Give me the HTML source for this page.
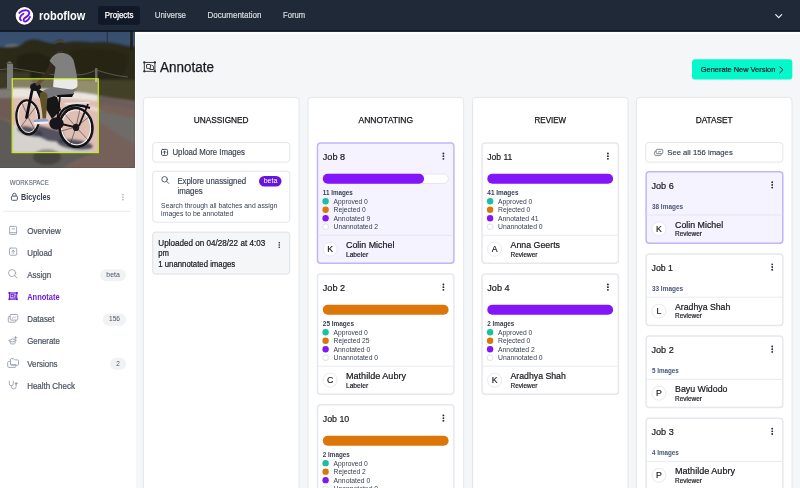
<!DOCTYPE html>
<html><head><meta charset="utf-8"><title>Annotate</title>
<style>
html,body{margin:0;padding:0;width:800px;height:488px;overflow:hidden;background:#f4f6f8}
svg{display:block;font-family:"Liberation Sans",sans-serif}
text{white-space:pre}
</style></head><body>
<svg style="opacity:0.999" width="800" height="488" viewBox="0 0 800 488">
<rect x="0" y="0" width="800" height="488" fill="#f4f6f8"/>
<rect x="0" y="30" width="136.2" height="459" fill="#fff"/>
<rect x="136" y="30" width="664" height="4.1" fill="#fff"/>
<defs>
<clipPath id="pc"><rect x="0" y="30" width="134.75" height="137.8"/></clipPath>
<filter id="b1" x="-10%" y="-10%" width="120%" height="120%"><feGaussianBlur stdDeviation="0.55"/></filter>
<filter id="b2" x="-10%" y="-10%" width="120%" height="120%"><feGaussianBlur stdDeviation="1.2"/></filter>
<linearGradient id="sky" x1="0" y1="0" x2="0" y2="1"><stop offset="0" stop-color="#638dc8"/><stop offset="1" stop-color="#6c95cc"/></linearGradient>
</defs>
<g clip-path="url(#pc)">
<rect x="0" y="29" width="135" height="139" fill="#504e2e"/>
<g filter="url(#b2)">
<rect x="-3" y="24" width="141" height="28" fill="url(#sky)"/>
<ellipse cx="13" cy="46.5" rx="8" ry="2.3" fill="#c9d0da"/><ellipse cx="41" cy="46" rx="7" ry="2.2" fill="#c3cad4"/><ellipse cx="126" cy="51" rx="9" ry="3.5" fill="#c5cdd6"/>
<path d="M-3 47C6 46.5 16 48 22 44 26 39 34 38.5 40 40 46 42 52 44 62 43 68 41 80 41 92 42 104 41 116 42.5 124 45 130 47 138 46 138 46V102H-3Z" fill="#504e2e"/>
<path d="M18 56C30 50 44 52 52 60 50 72 40 78 28 80 16 76 14 64 18 56Z" fill="#403e23"/>
<path d="M70 50C90 46 110 48 128 54 130 70 120 84 100 88 84 84 74 70 70 50Z" fill="#464326"/>
<path d="M-3 72H30V88H-3Z" fill="#6e6842"/>
<path d="M76 80H138V100H76Z" fill="#7a744a"/>
<path d="M12 79H32V90H12Z" fill="#6b6641"/>
<!-- ground -->
<path d="M-3 89.5C10 88 30 88 60 90 80 92 100 97 138 101V170H-3Z" fill="#d8b0a4"/>
<path d="M-3 89.5C10 88 24 88 40 89 60 90.5 80 92 98 95L98 101C70 98 40 97 -3 98Z" fill="#e6e0d7"/>
<path d="M98 96C110 98 124 101 138 104V110C124 107 110 105 98 104Z" fill="#c2aaa2"/>
<path d="M98 111L138 118.5V147L98 121Z" fill="#c8c4c0"/>
<path d="M76 104C86 105 94 107 100 109L100 112C92 110 84 108 76 107.5Z" fill="#ecd6cc"/>
<path d="M-3 118L12 124 51 138.8 98 152.4V153C85 156 70 162 60 170H-3Z" fill="#cecac5"/>
<path d="M-3 118L12.2 123.5V152.6H98C85 156 70 162 60 170H-3Z" fill="#a9a4a0"/>
<path d="M-3 98L13 98 13 121-3 117Z" fill="#c9a79b"/>
<rect x="12.2" y="78.8" width="86.1" height="73.8" fill="#fff" fill-opacity=".18"/>
<ellipse cx="47" cy="157" rx="14" ry="8" fill="#56524f" fill-opacity=".5"/>
<g fill="#34364a" fill-opacity=".8"><ellipse cx="30" cy="131.5" rx="13" ry="4.5" transform="rotate(14 30 131.5)"/><path d="M38 125L62 131 67 143 48 141 35 135Z"/><ellipse cx="75" cy="144.5" rx="18" ry="5" transform="rotate(7 75 144.5)"/></g>
</g>
</g>
<g filter="url(#b1)">
<!-- fence -->
<path d="M7 64h6v25h-6z" fill="#dcdcdc"/><path d="M6 63.5l3.5-2.5 3.5 2.5z" fill="#cfcfcf"/>
<path d="M13 68C24 70 34 72 56 75M76 75C84 75 90 73 96 70 106 73 116 76 128 77M-2 70L7 69" fill="none" stroke="#b4b4b2" stroke-width=".8"/>
<path d="M95 68h2.5v14H95z" fill="#bdbdbd"/>
<path d="M107.3 30V46" stroke="#4a5056" stroke-width=".9"/><path d="M131.5 29V50" stroke="#3d3d30" stroke-width="2.6"/>
<!-- wheels -->
<ellipse cx="27.7" cy="117.3" rx="11.2" ry="17" fill="none" stroke="#121216" stroke-width="2.3" transform="rotate(-5 27.7 117.3)"/>
<ellipse cx="27.7" cy="117.3" rx="9.6" ry="15.3" fill="none" stroke="#f2f2f2" stroke-width=".9" transform="rotate(-5 27.7 117.3)"/>
<ellipse cx="76" cy="127.4" rx="16.4" ry="19.4" fill="none" stroke="#121216" stroke-width="2.6" transform="rotate(-7 76 127.4)"/>
<ellipse cx="76" cy="127.4" rx="14.5" ry="17.4" fill="none" stroke="#f4f4f4" stroke-width="1" transform="rotate(-7 76 127.4)"/>
<path d="M76 127L64 113M76 127L90 116M76 127L70 145M76 127L88 140M76 127L61 131M76 127L80 109M28 117L22 103M28 117L37 105M28 117L20 128M28 117L35 130M28 117L29 100" stroke="#2e2e34" stroke-width=".55"/>
<ellipse cx="76" cy="127.4" rx="3.2" ry="3.6" fill="#1a1a1e"/>
<!-- frame -->
<path d="M58 121C60 106 74 102 90 108" fill="none" stroke="#101014" stroke-width="2.3"/>
<path d="M33 86L26.5 117.5" stroke="#101014" stroke-width="2.8" stroke-linecap="round"/>
<ellipse cx="35.5" cy="87" rx="5.5" ry="4" fill="#15151a"/>
<path d="M35 88L57 97 61 110 52 119 39 97Z" fill="#131318"/>
<path d="M60 96L57 122M57 123L76 127.4M88 104L79 126" fill="none" stroke="#121216" stroke-width="1.8"/>
<path d="M64.5 102.8L89.5 101.8 90 103.3 65 104.8Z" fill="#e4e4e4"/>
<path d="M54.5 93C58 90.8 69 90.8 74 93.2L72 97H57.5Z" fill="#0f0f12"/>
<ellipse cx="56.5" cy="123.5" rx="7.2" ry="6.2" fill="#16161a"/>
<!-- person -->
<circle cx="59.2" cy="46.2" r="6.3" fill="#4f4a3a"/><path d="M53.5 45a5.9 5.9 0 0 1 11.6-1.5C61 41.5 57.5 42.5 53.5 45Z" fill="#77776f"/>
<path d="M57 51h6v4h-6z" fill="#6a5a44"/>
<path d="M50 62C48 70 42 78 35 84L37.5 86C45 80 51.5 73 55 66Z" fill="#5f4f38"/>
<path d="M49.5 61C52 56 56 53 60 53 66 52.5 71 55 73.5 60 76 70 78 80 77.5 86 76 90 66 92 53.5 91 52.5 84 54.5 74 55.5 67Z" fill="#e9e9e7"/>
<path d="M53 87C60 88 68 89 75 90L73 94 58 95 46 99 40 95 44 90Z" fill="#74747a"/>
<path d="M40 93C43 91 47 92.5 47.5 96L46 118.5 42.5 118.5C42.5 108 39 100 40 93Z" fill="#5e5226"/>
<path d="M33.5 120.5C37 118.5 44 118.5 48 119.5L48.3 122 34 123Z" fill="#8fa0c4"/><path d="M33.5 122L48.3 121.5 48.3 123.5 34 124.5Z" fill="#eef0f6"/>
</g>
<path d="M0 29h135v139H0ZM12.2 78.8V152.6H98.3V78.8Z" fill="#000" fill-opacity=".45" fill-rule="evenodd"/>
<rect x="12.2" y="78.8" width="86.1" height="73.8" fill="none" stroke="#c9f01c" stroke-width="1.15"/>
</g>
<text x="9.75" y="185.2" font-size="7.07" fill="#6b7280" textLength="39" lengthAdjust="spacingAndGlyphs" stroke="#6b7280" stroke-width="0.15">WORKSPACE</text>
<g fill="none" stroke="#4b5563" stroke-width=".95"><rect x="11.4" y="196.1" width="6" height="4.2" rx="1"/><path d="M12.7 196.1v-1.2a1.7 1.7 0 0 1 3.4 0v1.2"/></g>
<text x="21.1" y="199.8" font-size="8.53" fill="#374151" font-weight="bold" textLength="29.4" lengthAdjust="spacingAndGlyphs">Bicycles</text>
<circle cx="122.9" cy="194.7" r="0.8" fill="#9ca3af"/>
<circle cx="122.9" cy="197.2" r="0.8" fill="#9ca3af"/>
<circle cx="122.9" cy="199.7" r="0.8" fill="#9ca3af"/>
<rect x="3.2" y="210.7" width="127.5" height="1" fill="#e8eaf0"/>
<text x="27.2" y="233.5" font-size="8.53" fill="#4b5563" textLength="33.7" lengthAdjust="spacingAndGlyphs" stroke="#4b5563" stroke-width="0.22">Overview</text>
<text x="27.2" y="255.67" font-size="8.53" fill="#4b5563" textLength="25" lengthAdjust="spacingAndGlyphs" stroke="#4b5563" stroke-width="0.22">Upload</text>
<text x="27.2" y="277.84" font-size="8.53" fill="#4b5563" textLength="24" lengthAdjust="spacingAndGlyphs" stroke="#4b5563" stroke-width="0.22">Assign</text>
<rect x="100.1" y="269.14" width="25.9" height="12.2" fill="#f1f2f4" rx="6.1"/>
<text x="106.25" y="277.04" font-size="6.86" fill="#4b5563" textLength="13.6" lengthAdjust="spacingAndGlyphs">beta</text>
<text x="27.2" y="300.01" font-size="8.53" fill="#6a1bd6" font-weight="bold" textLength="32.4" lengthAdjust="spacingAndGlyphs">Annotate</text>
<text x="27.2" y="322.18" font-size="8.53" fill="#4b5563" textLength="27.3" lengthAdjust="spacingAndGlyphs" stroke="#4b5563" stroke-width="0.22">Dataset</text>
<rect x="102.8" y="313.48" width="23.4" height="12.2" fill="#f1f2f4" rx="6.1"/>
<text x="109" y="321.38" font-size="6.86" fill="#4b5563" textLength="11" lengthAdjust="spacingAndGlyphs">156</text>
<text x="27.2" y="344.35" font-size="8.53" fill="#4b5563" textLength="32.7" lengthAdjust="spacingAndGlyphs" stroke="#4b5563" stroke-width="0.22">Generate</text>
<text x="27.2" y="366.52" font-size="8.53" fill="#4b5563" textLength="30.4" lengthAdjust="spacingAndGlyphs" stroke="#4b5563" stroke-width="0.22">Versions</text>
<rect x="110" y="357.82" width="16.2" height="12.2" fill="#f1f2f4" rx="6.1"/>
<text x="116.3" y="365.72" font-size="6.86" fill="#4b5563" textLength="3.6" lengthAdjust="spacingAndGlyphs">2</text>
<text x="27.2" y="388.69" font-size="8.53" fill="#4b5563" textLength="47.7" lengthAdjust="spacingAndGlyphs" stroke="#4b5563" stroke-width="0.22">Health Check</text>
<g fill="none" stroke="#9aa1ad" stroke-width=".9" stroke-linecap="round" stroke-linejoin="round">
<rect x="9.6" y="226.4" width="7" height="8" rx=".8"/><path d="M9.6 232.7h7"/><rect x="11.9" y="228.3" width="3" height="1.3" fill="#b9bec8" stroke="none"/>
<rect x="9.55" y="248.05" width="7.2" height="7.2" rx="1"/><path d="M13.15 253.5v-3.2M11.6 251.7l1.55-1.5 1.55 1.5"/>
<circle cx="12.1" cy="273.05" r="3.5"/><path d="M14.7 275.65l2.4 2.4"/>
<rect x="8.3" y="316.6" width="7.6" height="5.6" rx="1"/><rect x="10.2" y="314.5" width="7.6" height="5.6" rx="1" fill="#fff"/><path d="M12.2 318.4l1.3-1.2 1 .8 1.3-1.4" stroke-width=".7"/>
<path d="M9 340.4l3.7-1.5 3.7 1.5-3.7 1.5zM10.2 341.3v1.9c0 1.1 5 1.1 5 0v-1.9M15.6 336.5v2.6M14.3 337.8h2.6"/>
<path d="M7.7 362.2a.8.8 0 0 1 .8-.8h2v2.4a.8.8 0 0 0 .8.8h4.5v2a.8.8 0 0 1-.8.8H8.5a.8.8 0 0 1-.8-.8z"/><path d="M10.5 359.5a.8.8 0 0 1 .8-.8h2.1l1.2 1.2h3.1a.8.8 0 0 1 .8.8v3.7a.8.8 0 0 1-.8.8h-6.4a.8.8 0 0 1-.8-.8z"/>
<path d="M9.3 381.2v2.5a2 2 0 0 0 4 0v-2.5M11.3 385.7v.9a2.4 2.4 0 0 0 4.8 0v-2.1"/><circle cx="16.15" cy="383.5" r=".9" fill="#a3a9b5"/>
</g>
<g fill="none" stroke="#6a1bd6" stroke-width="1"><rect x="9.4" y="292.9" width="7.4" height="6.3"/><rect x="11.1" y="294.5" width="2.4" height="2.2" stroke-width=".7"/><path d="M14.3 294.9l1.5 1v2.1h-2.8" stroke-width=".7"/></g>
<g fill="#6a1bd6"><rect x="8.5" y="292" width="1.8" height="1.8"/><rect x="15.9" y="292" width="1.8" height="1.8"/><rect x="8.5" y="298.3" width="1.8" height="1.8"/><rect x="15.9" y="298.3" width="1.8" height="1.8"/><rect x="9.4" y="292.9" width="7.4" height="6.3" fill-opacity=".35"/></g>
<rect x="0" y="0" width="800" height="31.7" fill="#1f2937"/>
<rect x="0" y="30.3" width="800" height="1.4" fill="#0d1424"/>
<circle cx="24.45" cy="15.85" r="9.4" fill="#151c2a"/><circle cx="24.45" cy="15.85" r="8.8" fill="#fff"/>
<g fill="none" stroke="#6a14e2" stroke-width="1.9" stroke-linecap="round"><path d="M19.3 12.9C21.5 10.8 24.5 10 26.8 10.4 29.3 10.9 30 13.2 28.4 15.2 27 17 24.4 17.6 23.7 19.3 23 21.1 24.8 22 26.5 21.1 28 20.2 29.2 18.8 29.9 17"/><path d="M23.4 13.7C21.5 14.8 20.3 16.3 20 17.8 19.8 19 20.3 19.8 21 20.3"/></g>
<text x="39" y="19.75" font-size="12.27" fill="#fff" font-weight="bold" textLength="46.25" lengthAdjust="spacingAndGlyphs">roboflow</text>
<rect x="98.1" y="6" width="41.9" height="18.75" fill="#111827" rx="3"/>
<text x="104.75" y="18.1" font-size="8.22" fill="#fff" textLength="28.75" lengthAdjust="spacingAndGlyphs" stroke="#fff" stroke-width="0.25">Projects</text>
<text x="154.75" y="18.1" font-size="8.22" fill="#d8dbe0" textLength="31.25" lengthAdjust="spacingAndGlyphs" stroke="#d8dbe0" stroke-width="0.2">Universe</text>
<text x="207.5" y="18.1" font-size="8.22" fill="#d8dbe0" textLength="54" lengthAdjust="spacingAndGlyphs" stroke="#d8dbe0" stroke-width="0.2">Documentation</text>
<text x="283" y="18.1" font-size="8.22" fill="#d8dbe0" textLength="22" lengthAdjust="spacingAndGlyphs" stroke="#d8dbe0" stroke-width="0.2">Forum</text>
<path d="M775.7 14.7l3 3 3-3" fill="none" stroke="#f3f4f6" stroke-width="1.2" stroke-linecap="round" stroke-linejoin="round"/>
<g fill="none" stroke="#2b2b2e" stroke-width=".9"><rect x="144.3" y="62.4" width="10.6" height="8.9"/><rect x="146.5" y="64.5" width="4" height="3.9" rx=".5"/><path d="M151.4 65l2.2 1.3v3.2h-3.8l.8-1.1"/></g><g fill="#2b2b2e"><circle cx="144.3" cy="62.4" r="1.15"/><circle cx="154.9" cy="62.4" r="1.15"/><circle cx="144.3" cy="71.3" r="1.15"/><circle cx="154.9" cy="71.3" r="1.15"/></g>
<text x="160" y="71.6" font-size="14.04" fill="#17181c" textLength="54" lengthAdjust="spacingAndGlyphs" stroke="#17181c" stroke-width="0.25">Annotate</text>
<rect x="692" y="59.35" width="100.3" height="20.25" fill="#03f9cb" rx="3"/>
<text x="700.8" y="71.5" font-size="8.11" fill="#15161b" textLength="74.5" lengthAdjust="spacingAndGlyphs" stroke="#15161b" stroke-width="0.2">Generate New Version</text>
<path d="M779.9 66.9l3 2.9-3 2.9" fill="none" stroke="#111827" stroke-width="1" stroke-linecap="round" stroke-linejoin="round"/>
<rect x="143.4" y="97.4" width="155.6" height="400" fill="#fff" rx="3.5" stroke="#e3e6ec" stroke-width="1"/>
<text x="193.8" y="123.2" font-size="8.63" fill="#15161b" textLength="54.8" lengthAdjust="spacingAndGlyphs" stroke="#15161b" stroke-width="0.25">UNASSIGNED</text>
<rect x="308" y="97.4" width="155.6" height="400" fill="#fff" rx="3.5" stroke="#e3e6ec" stroke-width="1"/>
<text x="358.55" y="123.2" font-size="8.63" fill="#15161b" textLength="54.5" lengthAdjust="spacingAndGlyphs" stroke="#15161b" stroke-width="0.25">ANNOTATING</text>
<rect x="472.5" y="97.4" width="155.6" height="400" fill="#fff" rx="3.5" stroke="#e3e6ec" stroke-width="1"/>
<text x="534.55" y="123.2" font-size="8.63" fill="#15161b" textLength="31.5" lengthAdjust="spacingAndGlyphs" stroke="#15161b" stroke-width="0.25">REVIEW</text>
<rect x="636.4" y="97.4" width="155.6" height="400" fill="#fff" rx="3.5" stroke="#e3e6ec" stroke-width="1"/>
<text x="695.7" y="123.2" font-size="8.63" fill="#15161b" textLength="37" lengthAdjust="spacingAndGlyphs" stroke="#15161b" stroke-width="0.25">DATASET</text>
<rect x="152.7" y="142.6" width="137.1" height="19.5" fill="#fff" rx="3" stroke="#e3e5ea" stroke-width="1"/>
<g fill="none" stroke="#374151" stroke-width=".9" stroke-linecap="round" stroke-linejoin="round"><rect x="161.5" y="149.4" width="6.1" height="6" rx="1.1"/><path d="M164.55 154v-2.9M163.2 152.4l1.35-1.35 1.35 1.35"/></g>
<text x="172.4" y="155.25" font-size="8.22" fill="#374151" textLength="72.6" lengthAdjust="spacingAndGlyphs" stroke="#374151" stroke-width="0.15">Upload More Images</text>
<rect x="152.7" y="171.2" width="137.1" height="51" fill="#fff" rx="3" stroke="#e3e5ea" stroke-width="1"/>
<g fill="none" stroke="#4b5563" stroke-width="0.95" stroke-linecap="round"><circle cx="164.6" cy="179.3" r="2.75"/><path d="M166.7 181.4l2.1 2.1"/></g>
<text x="177.4" y="183.75" font-size="8.32" fill="#374151" textLength="68.7" lengthAdjust="spacingAndGlyphs" stroke="#374151" stroke-width="0.15">Explore unassigned</text>
<text x="177.4" y="194.1" font-size="8.32" fill="#374151" textLength="25.3" lengthAdjust="spacingAndGlyphs" stroke="#374151" stroke-width="0.15">images</text>
<rect x="259" y="175.9" width="22.5" height="10.7" fill="#6714db" rx="5.35"/>
<text x="263.7" y="183.4" font-size="7.28" fill="#fff" textLength="13.7" lengthAdjust="spacingAndGlyphs">beta</text>
<text x="161.1" y="207.7" font-size="6.97" fill="#374151" textLength="116.3" lengthAdjust="spacingAndGlyphs">Search through all batches and assign</text>
<text x="161.1" y="216.4" font-size="6.97" fill="#374151" textLength="72.2" lengthAdjust="spacingAndGlyphs">images to be annotated</text>
<rect x="152.7" y="232.1" width="137" height="42" fill="#f5f6f8" rx="3" stroke="#dde0e6" stroke-width="1"/>
<text x="158.3" y="245.7" font-size="8.42" fill="#15161b" textLength="106.9" lengthAdjust="spacingAndGlyphs" stroke="#15161b" stroke-width="0.2">Uploaded on 04/28/22 at 4:03</text>
<text x="158.3" y="256.1" font-size="8.42" fill="#15161b" textLength="10.7" lengthAdjust="spacingAndGlyphs" stroke="#15161b" stroke-width="0.2">pm</text>
<text x="158.3" y="266.7" font-size="8.42" fill="#15161b" textLength="76.9" lengthAdjust="spacingAndGlyphs" stroke="#15161b" stroke-width="0.2">1 unannotated images</text>
<circle cx="279.25" cy="242.75" r="0.8" fill="#1f2937"/>
<circle cx="279.25" cy="245" r="0.8" fill="#1f2937"/>
<circle cx="279.25" cy="247.25" r="0.8" fill="#1f2937"/>
<rect x="645.7" y="142.6" width="137.1" height="19.5" fill="#fff" rx="3" stroke="#e3e5ea" stroke-width="1"/>
<g fill="none" stroke="#6b7280" stroke-width=".85" stroke-linejoin="round"><rect x="654.65" y="151.1" width="6.6" height="4.3" rx=".9"/><rect x="656.2" y="149.3" width="6.6" height="4.3" rx=".9" fill="#fff"/><path d="M658 152.4l1.1-1 .8.6 1.2-1.3" stroke-width=".8"/></g>
<text x="667.25" y="155" font-size="8.11" fill="#374151" textLength="65.5" lengthAdjust="spacingAndGlyphs" stroke="#374151" stroke-width="0.15">See all 156 images</text>
<rect x="317.5" y="142.9" width="136.4" height="120.4" fill="#f5f3ff" rx="3.2" stroke="#c3b4fb" stroke-width="1.5"/>
<text x="322.8" y="159.85" font-size="9.88" fill="#15161b" textLength="22.25" lengthAdjust="spacingAndGlyphs" stroke="#15161b" stroke-width="0.2">Job 8</text>
<circle cx="443.4" cy="153.45" r="0.95" fill="#1f2937"/>
<circle cx="443.4" cy="156.15" r="0.95" fill="#1f2937"/>
<circle cx="443.4" cy="158.85" r="0.95" fill="#1f2937"/>
<rect x="323.1" y="174.05" width="125.2" height="9.4" fill="#fff" rx="4.7" stroke="#dfe0ea" stroke-width="0.8"/>
<rect x="322.8" y="173.75" width="101.27" height="10" fill="#8315f9" rx="5"/>
<text x="322.8" y="194.75" font-size="6.86" fill="#374151" font-weight="bold" textLength="29.9" lengthAdjust="spacingAndGlyphs">11 Images</text>
<circle cx="325.6" cy="201.2" r="3.2" fill="#18c2a0"/>
<text x="333.5" y="203.65" font-size="6.97" fill="#374151" textLength="34.3" lengthAdjust="spacingAndGlyphs">Approved 0</text>
<circle cx="325.6" cy="209.7" r="3.2" fill="#dc7609"/>
<text x="333.5" y="212.15" font-size="6.97" fill="#374151" textLength="32.3" lengthAdjust="spacingAndGlyphs">Rejected 0</text>
<circle cx="325.6" cy="218.2" r="3.2" fill="#8315f9"/>
<text x="333.5" y="220.65" font-size="6.97" fill="#374151" textLength="36.8" lengthAdjust="spacingAndGlyphs">Annotated 9</text>
<circle cx="325.6" cy="226.7" r="2.85" fill="#fff" stroke="#d6d9df" stroke-width="0.8"/>
<text x="333.5" y="229.15" font-size="6.97" fill="#374151" textLength="44.6" lengthAdjust="spacingAndGlyphs">Unannotated 2</text>
<path d="M317.9 235.25L453.4 235.25" stroke="#e6e5f1" stroke-width="1"/>
<circle cx="330.1" cy="249.15" r="7" fill="#fff" stroke="#e2e4e9" stroke-width="0.8"/>
<text x="330.1" y="252.15" font-size="8.74" fill="#15161b" text-anchor="middle" stroke="#15161b" stroke-width="0.15">K</text>
<text x="346" y="247.95" font-size="9.26" fill="#15161b" textLength="48.4" lengthAdjust="spacingAndGlyphs" stroke="#15161b" stroke-width="0.2">Colin Michel</text>
<text x="346" y="256.55" font-size="6.66" fill="#1b1d24" textLength="22.1" lengthAdjust="spacingAndGlyphs" stroke="#1b1d24" stroke-width="0.2">Labeler</text>
<rect x="317.5" y="273.9" width="136.4" height="120.4" fill="#fff" rx="3.2" stroke="#e6e8ed" stroke-width="1.5"/>
<text x="322.8" y="290.85" font-size="9.88" fill="#15161b" textLength="22.25" lengthAdjust="spacingAndGlyphs" stroke="#15161b" stroke-width="0.2">Job 2</text>
<circle cx="443.4" cy="284.45" r="0.95" fill="#1f2937"/>
<circle cx="443.4" cy="287.15" r="0.95" fill="#1f2937"/>
<circle cx="443.4" cy="289.85" r="0.95" fill="#1f2937"/>
<rect x="322.8" y="304.75" width="125.8" height="10" fill="#dc7609" rx="5"/>
<text x="322.8" y="325.75" font-size="6.86" fill="#374151" font-weight="bold" textLength="31.2" lengthAdjust="spacingAndGlyphs">25 Images</text>
<circle cx="325.6" cy="332.2" r="3.2" fill="#18c2a0"/>
<text x="333.5" y="334.65" font-size="6.97" fill="#374151" textLength="34.3" lengthAdjust="spacingAndGlyphs">Approved 0</text>
<circle cx="325.6" cy="340.7" r="3.2" fill="#dc7609"/>
<text x="333.5" y="343.15" font-size="6.97" fill="#374151" textLength="36.15" lengthAdjust="spacingAndGlyphs">Rejected 25</text>
<circle cx="325.6" cy="349.2" r="3.2" fill="#8315f9"/>
<text x="333.5" y="351.65" font-size="6.97" fill="#374151" textLength="36.8" lengthAdjust="spacingAndGlyphs">Annotated 0</text>
<circle cx="325.6" cy="357.7" r="2.85" fill="#fff" stroke="#d6d9df" stroke-width="0.8"/>
<text x="333.5" y="360.15" font-size="6.97" fill="#374151" textLength="44.6" lengthAdjust="spacingAndGlyphs">Unannotated 0</text>
<path d="M317.9 366.25L453.4 366.25" stroke="#e9ebef" stroke-width="1"/>
<circle cx="330.1" cy="380.15" r="7" fill="#fff" stroke="#e2e4e9" stroke-width="0.8"/>
<text x="330.1" y="383.15" font-size="8.74" fill="#15161b" text-anchor="middle" stroke="#15161b" stroke-width="0.15">C</text>
<text x="346" y="378.95" font-size="9.26" fill="#15161b" textLength="60" lengthAdjust="spacingAndGlyphs" stroke="#15161b" stroke-width="0.2">Mathilde Aubry</text>
<text x="346" y="387.55" font-size="6.66" fill="#1b1d24" textLength="22.1" lengthAdjust="spacingAndGlyphs" stroke="#1b1d24" stroke-width="0.2">Labeler</text>
<rect x="317.5" y="404.85" width="136.4" height="120.4" fill="#fff" rx="3.2" stroke="#e6e8ed" stroke-width="1.5"/>
<text x="322.8" y="421.8" font-size="9.88" fill="#15161b" textLength="26.4" lengthAdjust="spacingAndGlyphs" stroke="#15161b" stroke-width="0.2">Job 10</text>
<circle cx="443.4" cy="415.4" r="0.95" fill="#1f2937"/>
<circle cx="443.4" cy="418.1" r="0.95" fill="#1f2937"/>
<circle cx="443.4" cy="420.8" r="0.95" fill="#1f2937"/>
<rect x="322.8" y="435.7" width="125.8" height="10" fill="#dc7609" rx="5"/>
<text x="322.8" y="456.7" font-size="6.86" fill="#374151" font-weight="bold" textLength="27" lengthAdjust="spacingAndGlyphs">2 Images</text>
<circle cx="325.6" cy="463.15" r="3.2" fill="#18c2a0"/>
<text x="333.5" y="465.6" font-size="6.97" fill="#374151" textLength="34.3" lengthAdjust="spacingAndGlyphs">Approved 0</text>
<circle cx="325.6" cy="471.65" r="3.2" fill="#dc7609"/>
<text x="333.5" y="474.1" font-size="6.97" fill="#374151" textLength="32.3" lengthAdjust="spacingAndGlyphs">Rejected 2</text>
<circle cx="325.6" cy="480.15" r="3.2" fill="#8315f9"/>
<text x="333.5" y="482.6" font-size="6.97" fill="#374151" textLength="36.8" lengthAdjust="spacingAndGlyphs">Annotated 0</text>
<circle cx="325.6" cy="488.65" r="2.85" fill="#fff" stroke="#d6d9df" stroke-width="0.8"/>
<text x="333.5" y="491.1" font-size="6.97" fill="#374151" textLength="44.6" lengthAdjust="spacingAndGlyphs">Unannotated 0</text>
<rect x="482" y="142.9" width="136.4" height="120.4" fill="#fff" rx="3.2" stroke="#e6e8ed" stroke-width="1.5"/>
<text x="487.3" y="159.85" font-size="9.88" fill="#15161b" textLength="25" lengthAdjust="spacingAndGlyphs" stroke="#15161b" stroke-width="0.2">Job 11</text>
<circle cx="607.9" cy="153.45" r="0.95" fill="#1f2937"/>
<circle cx="607.9" cy="156.15" r="0.95" fill="#1f2937"/>
<circle cx="607.9" cy="158.85" r="0.95" fill="#1f2937"/>
<rect x="487.3" y="173.75" width="125.8" height="10" fill="#8315f9" rx="5"/>
<text x="487.3" y="194.75" font-size="6.86" fill="#374151" font-weight="bold" textLength="31.2" lengthAdjust="spacingAndGlyphs">41 Images</text>
<circle cx="490.1" cy="201.2" r="3.2" fill="#18c2a0"/>
<text x="498" y="203.65" font-size="6.97" fill="#374151" textLength="34.3" lengthAdjust="spacingAndGlyphs">Approved 0</text>
<circle cx="490.1" cy="209.7" r="3.2" fill="#dc7609"/>
<text x="498" y="212.15" font-size="6.97" fill="#374151" textLength="32.3" lengthAdjust="spacingAndGlyphs">Rejected 0</text>
<circle cx="490.1" cy="218.2" r="3.2" fill="#8315f9"/>
<text x="498" y="220.65" font-size="6.97" fill="#374151" textLength="40.65" lengthAdjust="spacingAndGlyphs">Annotated 41</text>
<circle cx="490.1" cy="226.7" r="2.85" fill="#fff" stroke="#d6d9df" stroke-width="0.8"/>
<text x="498" y="229.15" font-size="6.97" fill="#374151" textLength="44.6" lengthAdjust="spacingAndGlyphs">Unannotated 0</text>
<path d="M482.4 235.25L617.9 235.25" stroke="#e9ebef" stroke-width="1"/>
<circle cx="494.6" cy="249.15" r="7" fill="#fff" stroke="#e2e4e9" stroke-width="0.8"/>
<text x="494.6" y="252.15" font-size="8.74" fill="#15161b" text-anchor="middle" stroke="#15161b" stroke-width="0.15">A</text>
<text x="510.5" y="247.95" font-size="9.26" fill="#15161b" textLength="49.5" lengthAdjust="spacingAndGlyphs" stroke="#15161b" stroke-width="0.2">Anna Geerts</text>
<text x="510.5" y="256.55" font-size="6.66" fill="#1b1d24" textLength="26.9" lengthAdjust="spacingAndGlyphs" stroke="#1b1d24" stroke-width="0.2">Reviewer</text>
<rect x="482" y="273.9" width="136.4" height="120.4" fill="#fff" rx="3.2" stroke="#e6e8ed" stroke-width="1.5"/>
<text x="487.3" y="290.85" font-size="9.88" fill="#15161b" textLength="22.25" lengthAdjust="spacingAndGlyphs" stroke="#15161b" stroke-width="0.2">Job 4</text>
<circle cx="607.9" cy="284.45" r="0.95" fill="#1f2937"/>
<circle cx="607.9" cy="287.15" r="0.95" fill="#1f2937"/>
<circle cx="607.9" cy="289.85" r="0.95" fill="#1f2937"/>
<rect x="487.3" y="304.75" width="125.8" height="10" fill="#8315f9" rx="5"/>
<text x="487.3" y="325.75" font-size="6.86" fill="#374151" font-weight="bold" textLength="27" lengthAdjust="spacingAndGlyphs">2 Images</text>
<circle cx="490.1" cy="332.2" r="3.2" fill="#18c2a0"/>
<text x="498" y="334.65" font-size="6.97" fill="#374151" textLength="34.3" lengthAdjust="spacingAndGlyphs">Approved 0</text>
<circle cx="490.1" cy="340.7" r="3.2" fill="#dc7609"/>
<text x="498" y="343.15" font-size="6.97" fill="#374151" textLength="32.3" lengthAdjust="spacingAndGlyphs">Rejected 0</text>
<circle cx="490.1" cy="349.2" r="3.2" fill="#8315f9"/>
<text x="498" y="351.65" font-size="6.97" fill="#374151" textLength="36.8" lengthAdjust="spacingAndGlyphs">Annotated 2</text>
<circle cx="490.1" cy="357.7" r="2.85" fill="#fff" stroke="#d6d9df" stroke-width="0.8"/>
<text x="498" y="360.15" font-size="6.97" fill="#374151" textLength="44.6" lengthAdjust="spacingAndGlyphs">Unannotated 0</text>
<path d="M482.4 366.25L617.9 366.25" stroke="#e9ebef" stroke-width="1"/>
<circle cx="494.6" cy="380.15" r="7" fill="#fff" stroke="#e2e4e9" stroke-width="0.8"/>
<text x="494.6" y="383.15" font-size="8.74" fill="#15161b" text-anchor="middle" stroke="#15161b" stroke-width="0.15">K</text>
<text x="510.5" y="378.95" font-size="9.26" fill="#15161b" textLength="55.3" lengthAdjust="spacingAndGlyphs" stroke="#15161b" stroke-width="0.2">Aradhya Shah</text>
<text x="510.5" y="387.55" font-size="6.66" fill="#1b1d24" textLength="26.9" lengthAdjust="spacingAndGlyphs" stroke="#1b1d24" stroke-width="0.2">Reviewer</text>
<rect x="646.1" y="171.75" width="136.7" height="71.5" fill="#f5f3ff" rx="3.2" stroke="#c3b4fb" stroke-width="1.5"/>
<text x="651.5" y="188.5" font-size="9.88" fill="#15161b" textLength="22.25" lengthAdjust="spacingAndGlyphs" stroke="#15161b" stroke-width="0.2">Job 6</text>
<circle cx="772.2" cy="182.2" r="0.95" fill="#1f2937"/>
<circle cx="772.2" cy="184.9" r="0.95" fill="#1f2937"/>
<circle cx="772.2" cy="187.6" r="0.95" fill="#1f2937"/>
<text x="651.9" y="208.5" font-size="6.86" fill="#4a5578" font-weight="bold" textLength="31.2" lengthAdjust="spacingAndGlyphs">38 Images</text>
<path d="M646.5 215L782.3 215" stroke="#e6e5f1" stroke-width="1"/>
<circle cx="658.9" cy="228.9" r="7" fill="#fff" stroke="#e2e4e9" stroke-width="0.8"/>
<text x="658.9" y="231.8" font-size="8.74" fill="#15161b" text-anchor="middle" stroke="#15161b" stroke-width="0.15">K</text>
<text x="675" y="227.5" font-size="9.26" fill="#15161b" textLength="48.1" lengthAdjust="spacingAndGlyphs" stroke="#15161b" stroke-width="0.2">Colin Michel</text>
<text x="675" y="236.2" font-size="6.66" fill="#1b1d24" textLength="26.9" lengthAdjust="spacingAndGlyphs" stroke="#1b1d24" stroke-width="0.2">Reviewer</text>
<rect x="646.1" y="253.9" width="136.7" height="71.5" fill="#fff" rx="3.2" stroke="#e6e8ed" stroke-width="1.5"/>
<text x="651.5" y="270.65" font-size="9.88" fill="#15161b" textLength="21.5" lengthAdjust="spacingAndGlyphs" stroke="#15161b" stroke-width="0.2">Job 1</text>
<circle cx="772.2" cy="264.35" r="0.95" fill="#1f2937"/>
<circle cx="772.2" cy="267.05" r="0.95" fill="#1f2937"/>
<circle cx="772.2" cy="269.75" r="0.95" fill="#1f2937"/>
<text x="651.9" y="290.65" font-size="6.86" fill="#4a5578" font-weight="bold" textLength="31.2" lengthAdjust="spacingAndGlyphs">33 Images</text>
<path d="M646.5 297.15L782.3 297.15" stroke="#e9ebef" stroke-width="1"/>
<circle cx="658.9" cy="311.05" r="7" fill="#fff" stroke="#e2e4e9" stroke-width="0.8"/>
<text x="658.9" y="313.95" font-size="8.74" fill="#15161b" text-anchor="middle" stroke="#15161b" stroke-width="0.15">L</text>
<text x="675" y="309.65" font-size="9.26" fill="#15161b" textLength="55.3" lengthAdjust="spacingAndGlyphs" stroke="#15161b" stroke-width="0.2">Aradhya Shah</text>
<text x="675" y="318.35" font-size="6.66" fill="#1b1d24" textLength="26.9" lengthAdjust="spacingAndGlyphs" stroke="#1b1d24" stroke-width="0.2">Reviewer</text>
<rect x="646.1" y="336.05" width="136.7" height="71.5" fill="#fff" rx="3.2" stroke="#e6e8ed" stroke-width="1.5"/>
<text x="651.5" y="352.8" font-size="9.88" fill="#15161b" textLength="22.25" lengthAdjust="spacingAndGlyphs" stroke="#15161b" stroke-width="0.2">Job 2</text>
<circle cx="772.2" cy="346.5" r="0.95" fill="#1f2937"/>
<circle cx="772.2" cy="349.2" r="0.95" fill="#1f2937"/>
<circle cx="772.2" cy="351.9" r="0.95" fill="#1f2937"/>
<text x="651.9" y="372.8" font-size="6.86" fill="#4a5578" font-weight="bold" textLength="27" lengthAdjust="spacingAndGlyphs">5 Images</text>
<path d="M646.5 379.3L782.3 379.3" stroke="#e9ebef" stroke-width="1"/>
<circle cx="658.9" cy="393.2" r="7" fill="#fff" stroke="#e2e4e9" stroke-width="0.8"/>
<text x="658.9" y="396.1" font-size="8.74" fill="#15161b" text-anchor="middle" stroke="#15161b" stroke-width="0.15">P</text>
<text x="675" y="391.8" font-size="9.26" fill="#15161b" textLength="52.5" lengthAdjust="spacingAndGlyphs" stroke="#15161b" stroke-width="0.2">Bayu Widodo</text>
<text x="675" y="400.5" font-size="6.66" fill="#1b1d24" textLength="26.9" lengthAdjust="spacingAndGlyphs" stroke="#1b1d24" stroke-width="0.2">Reviewer</text>
<rect x="646.1" y="418.2" width="136.7" height="71.5" fill="#fff" rx="3.2" stroke="#e6e8ed" stroke-width="1.5"/>
<text x="651.5" y="434.95" font-size="9.88" fill="#15161b" textLength="22.25" lengthAdjust="spacingAndGlyphs" stroke="#15161b" stroke-width="0.2">Job 3</text>
<circle cx="772.2" cy="428.65" r="0.95" fill="#1f2937"/>
<circle cx="772.2" cy="431.35" r="0.95" fill="#1f2937"/>
<circle cx="772.2" cy="434.05" r="0.95" fill="#1f2937"/>
<text x="651.9" y="454.95" font-size="6.86" fill="#4a5578" font-weight="bold" textLength="27" lengthAdjust="spacingAndGlyphs">4 Images</text>
<path d="M646.5 461.45L782.3 461.45" stroke="#e9ebef" stroke-width="1"/>
<circle cx="658.9" cy="475.35" r="7" fill="#fff" stroke="#e2e4e9" stroke-width="0.8"/>
<text x="658.9" y="478.25" font-size="8.74" fill="#15161b" text-anchor="middle" stroke="#15161b" stroke-width="0.15">P</text>
<text x="675" y="473.95" font-size="9.26" fill="#15161b" textLength="60" lengthAdjust="spacingAndGlyphs" stroke="#15161b" stroke-width="0.2">Mathilde Aubry</text>
<text x="675" y="482.65" font-size="6.66" fill="#1b1d24" textLength="26.9" lengthAdjust="spacingAndGlyphs" stroke="#1b1d24" stroke-width="0.2">Reviewer</text>
</svg>
</body></html>
